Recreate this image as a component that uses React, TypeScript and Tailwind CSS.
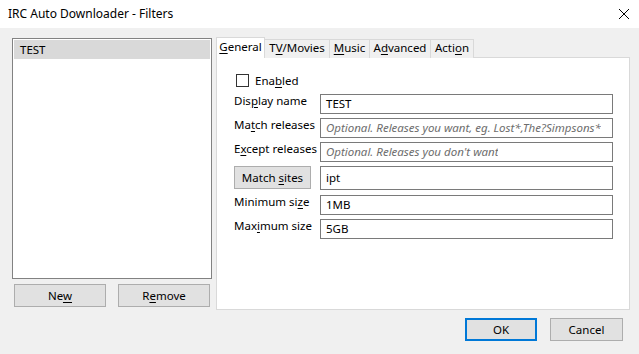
import React from 'react'

const font = { fontFamily: '"Noto Sans", "Open Sans", sans-serif' }

function U({ children }: { children: React.ReactNode }) {
  return <span className="underline underline-offset-[2px] decoration-[1px]">{children}</span>
}

function Field({ label, value, placeholder }: { label: React.ReactNode; value?: string; placeholder?: string }) {
  return (
    <div className="flex items-start h-[20px]">
      <div className="w-[86px] leading-[14px]">{label}</div>
      <div className="w-[293px] h-[20px] border border-[#7a7a7a] bg-white flex items-center px-[5px]">
        {value ? (
          <span>{value}</span>
        ) : (
          <span className="italic text-[#6d6d6d] whitespace-nowrap overflow-hidden">{placeholder}</span>
        )}
      </div>
    </div>
  )
}

const tabs: { key: string; node: React.ReactNode; w: number }[] = [
  { key: 'general', node: <><U>G</U>eneral</>, w: 49 },
  { key: 'tv', node: <>T<U>V</U>/Movies</>, w: 65 },
  { key: 'music', node: <><U>M</U>usic</>, w: 40 },
  { key: 'adv', node: <>A<U>d</U>vanced</>, w: 61 },
  { key: 'action', node: <>Acti<U>o</U>n</>, w: 43 },
]

export default function App() {
  return (
    <div className="w-[639px] h-[354px] bg-[#f0f0f0] flex flex-col text-[11.5px] text-black" style={font}>
      <div className="h-[28px] bg-white flex items-center justify-between pl-[8px] pr-[9px] shrink-0">
        <span className="text-[12px]">IRC Auto Downloader - Filters</span>
        <svg width="12" height="12" viewBox="0 0 12 12" className="mb-[1px]">
          <path d="M1 1 L11 11 M11 1 L1 11" stroke="#000" strokeWidth="1" />
        </svg>
      </div>

      <div className="flex pt-[9px] pl-[12px]">
        <div className="w-[200px] flex flex-col">
          <div className="mt-[1px] h-[241px] bg-white border border-[#828282] p-[1px]">
            <div className="h-[19px] bg-[#d9d9d9] flex items-center pl-[6px]">TEST</div>
          </div>
          <div className="mt-[5px] flex justify-between px-[2px]">
            <button className="w-[92px] h-[23px] bg-[#e1e1e1] border border-[#adadad]">
              Ne<U>w</U>
            </button>
            <button className="w-[92px] h-[23px] bg-[#e1e1e1] border border-[#adadad]">
              R<U>e</U>move
            </button>
          </div>
        </div>

        <div className="ml-[4px] w-[414px] flex flex-col">
          <div className="flex h-[21px] relative z-10">
            {tabs.map((t, i) =>
              i === 0 ? (
                <div
                  key={t.key}
                  className="h-[21px] pb-[3px] bg-white border border-b-0 border-[#d9d9d9] flex items-center justify-center"
                  style={{ width: t.w }}
                >
                  {t.node}
                </div>
              ) : (
                <div
                  key={t.key}
                  className="h-[19px] mt-[2px] pb-[2px] bg-[#f0f0f0] border border-l-0 border-b-0 border-[#d9d9d9] flex items-center justify-center"
                  style={{ width: t.w }}
                >
                  {t.node}
                </div>
              ),
            )}
          </div>
          <div className="-mt-[1px] h-[253px] bg-white border border-[#d9d9d9] pl-[17px] pt-[16px] flex flex-col">
            <div className="flex items-center h-[13px] ml-[2px]">
              <div className="w-[13px] h-[13px] border border-[#333] bg-white" />
              <span className="ml-[6px]">
                Ena<U>b</U>led
              </span>
            </div>
            <div className="mt-[7px] flex flex-col gap-[4px]">
              <Field label={<>Dis<U>p</U>lay name</>} value="TEST" />
              <Field
                label={<>Ma<U>t</U>ch releases</>}
                placeholder="Optional. Releases you want, eg. Lost*,The?Simpsons*"
              />
              <Field label={<>E<U>x</U>cept releases</>} placeholder="Optional. Releases you don't want" />
              <div className="flex items-start h-[24px]">
                <div className="w-[86px]">
                  <button className="w-[77px] h-[23px] bg-[#e1e1e1] border border-[#adadad]">
                    Match <U>s</U>ites
                  </button>
                </div>
                <div className="w-[293px] h-[24px] border border-[#7a7a7a] bg-white flex items-center px-[5px]">
                  ipt
                </div>
              </div>
              <div className="mt-[1px]">
                <Field label={<>Minimum si<U>z</U>e</>} value="1MB" />
              </div>
              <Field label={<>Max<U>i</U>mum size</>} value="5GB" />
            </div>
          </div>
        </div>
      </div>

      <div className="flex justify-end gap-[13px] pr-[16px] mt-[8px]">
        <button className="w-[72px] h-[23px] bg-[#e1e1e1] border-2 border-[#0078d7]">OK</button>
        <button className="w-[73px] h-[23px] bg-[#e1e1e1] border border-[#adadad]">Cancel</button>
      </div>
    </div>
  )
}
